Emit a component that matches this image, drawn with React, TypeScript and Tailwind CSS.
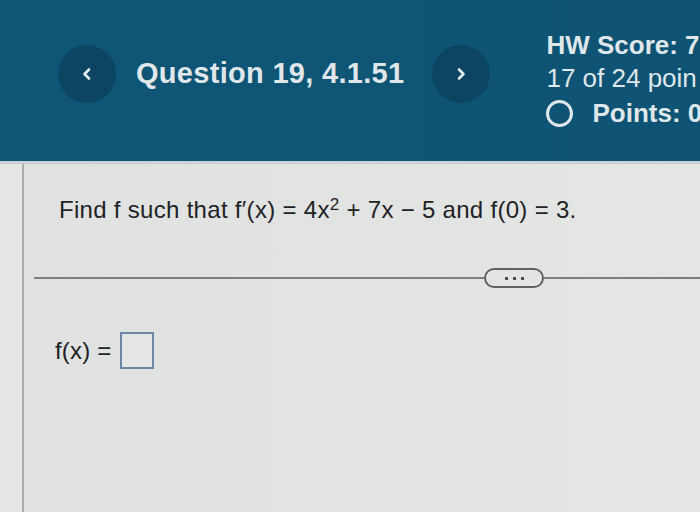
import React from 'react';

const NavButton = ({ dir }: { dir: 'prev' | 'next' }) => (
  <div className="w-[58px] h-[58px] rounded-full bg-[#0b4562] flex items-center justify-center shrink-0">
    <svg width="12" height="14" viewBox="0 0 12 14" fill="none">
      {dir === 'prev' ? (
        <path d="M8 2.5 L3.5 7 L8 11.5" stroke="#e3ecef" strokeWidth="2.6" strokeLinecap="round" strokeLinejoin="round" />
      ) : (
        <path d="M4 2.5 L8.5 7 L4 11.5" stroke="#e3ecef" strokeWidth="2.6" strokeLinecap="round" strokeLinejoin="round" />
      )}
    </svg>
  </div>
);

export default function App() {
  return (
    <div
      className="w-[700px] h-[512px] overflow-hidden flex flex-col bg-[#dfe2e0]"
      style={{ fontFamily: '"Liberation Sans", Arial, sans-serif' }}
    >
      {/* header */}
      <div className="h-[164px] shrink-0 bg-gradient-to-r from-[#0f5676] to-[#0e5374] flex items-start pl-[58px] border-b-[3px] border-[#c9d3d6]">
        <div className="mt-[45px] flex items-center">
          <NavButton dir="prev" />
          <h1 className="ml-[20px] text-[29px] font-bold text-[#dfe7ea] tracking-[0.3px] whitespace-nowrap">
            Question 19, 4.1.51
          </h1>
          <div className="ml-[28px]">
            <NavButton dir="next" />
          </div>
        </div>
        <div className="ml-[56px] mt-[29px] flex flex-col text-[#dfe7ea] whitespace-nowrap">
          <span className="text-[26px] font-bold leading-[32px]">HW Score: 7</span>
          <span className="text-[26px] leading-[34px]">17 of 24 poin</span>
          <div className="flex items-center gap-[19px] mt-[2px]">
            <span className="w-[27px] h-[27px] rounded-full border-[3px] border-[#dfe7ea] shrink-0" />
            <span className="text-[26px] font-bold leading-[32px]">Points: 0</span>
          </div>
        </div>
      </div>

      {/* body */}
      <div className="flex-1 flex">
        <div className="w-[24px] shrink-0 border-r-2 border-[#a9adab] bg-[#e4e6e4]" />
        <div className="flex-1 flex flex-col bg-gradient-to-r from-[#dfe2e0] to-[#e4e6e4]">
          <p className="mt-[28px] ml-[35px] text-[24px] text-[#1f2224] whitespace-nowrap tracking-[0.3px]">
            Find f such that f′(x) = 4x<sup className="text-[17px]">2</sup> + 7x − 5 and f(0) = 3.
          </p>

          <div className="mt-[40px] flex items-center">
            <div className="w-[450px] h-[2px] bg-[#7b7f7e] ml-[10px]" />
            <div className="w-[60px] h-[20px] rounded-full border-2 border-[#5d6160] flex items-center justify-center gap-[5px] bg-[#e2e5e3] shrink-0">
              <span className="w-[3px] h-[3px] bg-[#4a4e4d]" />
              <span className="w-[3px] h-[3px] bg-[#4a4e4d]" />
              <span className="w-[3px] h-[3px] bg-[#4a4e4d]" />
            </div>
            <div className="flex-1 h-[2px] bg-[#7b7f7e]" />
          </div>

          <div className="mt-[44px] ml-[31px] flex items-center gap-[8px]">
            <span className="text-[24px] text-[#1f2224] tracking-[0.2px]">f(x) =</span>
            <span className="w-[34px] h-[37px] border-2 border-[#6c87a6] bg-[#e4e7e5]" />
          </div>
        </div>
      </div>
    </div>
  );
}
